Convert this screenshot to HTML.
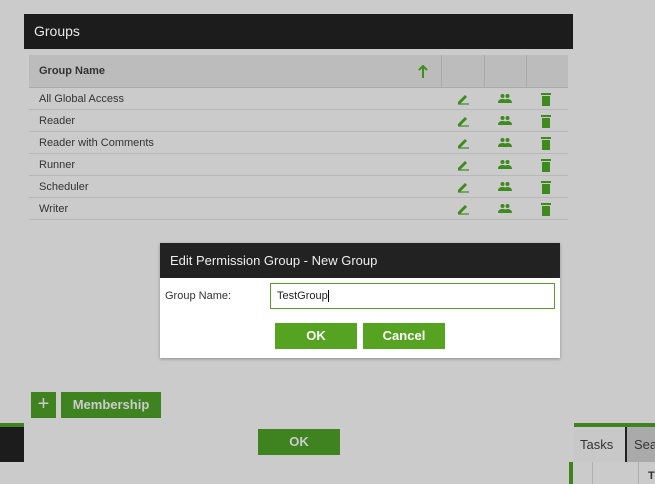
<!DOCTYPE html>
<html><head><meta charset="utf-8"><style>
*{margin:0;padding:0;box-sizing:border-box}
body{width:655px;height:484px;background:#cbcbcb;font-family:"Liberation Sans",sans-serif;position:relative;overflow:hidden;color:#222}
.a{position:absolute}
.hdr{background:#1c1c1c;color:#e8e8e8}
.row{position:absolute;left:29px;width:539px;height:22px;border-bottom:1px solid #b8b8b8;font-size:11px;line-height:23px;padding-left:10px;color:#333}
.ic{position:absolute;top:5px}
.btn{position:absolute;color:#fff;font-weight:bold;font-size:13px;text-align:center}
</style></head><body>
<div class="a hdr" style="left:24px;top:14px;width:549px;height:35px;font-size:14px;line-height:34px;padding-left:10px">Groups</div>
<div class="a" style="left:29px;top:55px;width:539px;height:33px;background:#bcbcbc;border-bottom:1px solid #aaa"></div>
<div class="a" style="left:441px;top:55px;width:1px;height:33px;background:#aaa"></div>
<div class="a" style="left:484px;top:55px;width:1px;height:33px;background:#aaa"></div>
<div class="a" style="left:526px;top:55px;width:1px;height:33px;background:#aaa"></div>
<div class="a" style="left:39px;top:65px;font-size:11px;font-weight:bold;color:#333">Group Name</div>
<svg class="a" style="left:418px;top:65px" width="10" height="13" viewBox="0 0 10 13"><path d="M5 1v12M1 5l4-4 4 4" stroke="#3f8f1f" stroke-width="2" fill="none"/></svg>
<div id="rows"></div>
<script>
var n=["All Global Access","Reader","Reader with Comments","Runner","Scheduler","Writer"],h="";
n.forEach(function(t,i){var y=88+i*22;h+='<div class="row" style="top:'+y+'px">'+t+
'<svg class="ic" style="left:427px;top:4px" width="14" height="13" viewBox="0 0 14 13"><path d="M2 10L9 3l2 2-7 7H2z" fill="#3f8a1f"/><path d="M2 12h11" stroke="#3f8a1f" stroke-width="1.2"/></svg>'+
'<svg class="ic" style="left:469px;top:6px" width="14" height="10" viewBox="0 0 14 10"><circle cx="4.5" cy="2" r="2" fill="#3f8a1f"/><circle cx="9.5" cy="2" r="2" fill="#3f8a1f"/><path d="M0 9c0-3 2-4 4.5-4S9 6 9 9zM6 9c0-3 1.5-4 3.5-4S14 6 14 9z" fill="#3f8a1f"/></svg>'+
'<svg class="ic" style="left:512px;top:4px" width="10" height="14" viewBox="0 0 10 14"><rect x="0" y="1" width="10" height="2" fill="#3f8a1f"/><rect x="1" y="4" width="8" height="10" fill="#3f8a1f"/></svg></div>';});
document.getElementById('rows').innerHTML=h;
</script>
<div class="a" style="left:160px;top:243px;width:400px;height:115px;background:#fff;box-shadow:0 1px 3px rgba(0,0,0,.3)"></div>
<div class="a" style="left:160px;top:243px;width:400px;height:35px;background:#222;color:#eee;font-size:13px;line-height:35px;padding-left:10px">Edit Permission Group - New Group</div>
<div class="a" style="left:165px;top:290px;font-size:11px;color:#333">Group Name:</div>
<div class="a" style="left:270px;top:283px;width:285px;height:26px;border:1px solid #58a02a;font-size:11px;line-height:24px;padding-left:6px">TestGroup<span style="border-left:1px solid #000"></span></div>
<div class="btn" style="left:275px;top:323px;width:82px;height:26px;line-height:26px;background:#55a321">OK</div>
<div class="btn" style="left:363px;top:323px;width:82px;height:26px;line-height:26px;background:#55a321">Cancel</div>
<div class="btn" style="left:31px;top:392px;width:25px;height:26px;line-height:24px;font-size:20px;background:#3f8220;color:#ccc;font-weight:normal">+</div>
<div class="btn" style="left:61px;top:392px;width:100px;height:26px;line-height:26px;background:#3f8220;color:#ccc">Membership</div>
<div class="a" style="left:0;top:423px;width:24px;height:4px;background:#3f8220"></div>
<div class="a" style="left:0;top:427px;width:24px;height:35px;background:#1c1c1c"></div>
<div class="btn" style="left:258px;top:429px;width:82px;height:26px;line-height:26px;background:#3f8220;color:#ccc">OK</div>
<div class="a" style="left:574px;top:423px;width:81px;height:4px;background:#3f8220"></div>
<div class="a" style="left:574px;top:427px;width:51px;height:35px;background:#c8c8c8;font-size:13px;line-height:35px;padding-left:6px;color:#333">Tasks</div>
<div class="a" style="left:625px;top:427px;width:2px;height:35px;background:#222"></div>
<div class="a" style="left:627px;top:427px;width:28px;height:35px;background:#aaa;font-size:13px;line-height:35px;padding-left:7px;color:#333;overflow:hidden">Sea</div>
<div class="a" style="left:569px;top:462px;width:4px;height:22px;background:#3f8220"></div>
<div class="a" style="left:592px;top:462px;width:1px;height:22px;background:#b0b0b0"></div>
<div class="a" style="left:638px;top:462px;width:1px;height:22px;background:#b0b0b0"></div>
<div class="a" style="left:648px;top:470px;font-size:11px;font-weight:bold;color:#333">T</div>
</body></html>
